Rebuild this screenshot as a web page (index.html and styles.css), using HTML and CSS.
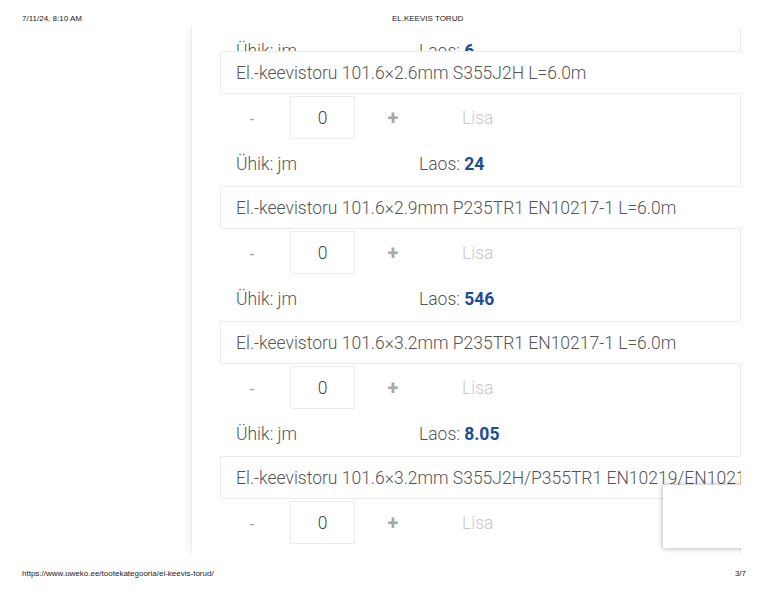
FILE: index.html
```html
<!DOCTYPE html>
<html lang="et">
<head>
    <meta charset="UTF-8">
    <meta name="viewport" content="width=device-width, initial-scale=1.0">
    <title>EL.KEEVIS TORUD</title>
    <link rel="stylesheet" href="styles.css">
</head>
<body>

    <!-- Prindi päis -->
    <header class="print-head">
        <span class="print-date">7/11/24, 8:10 AM</span>
        <span class="print-title">EL.KEEVIS TORUD</span>
    </header>

    <main class="page">
        <aside class="sidebar"></aside>

        <section class="panel">
            <div class="products">

                <!-- eelmise toote lõpp -->
                <div class="card card-partial">
                    <div class="info">
                        <span class="unit">Ühik: jm</span>
                        <span class="stock">Laos: <b>6</b></span>
                    </div>
                </div>

                <div class="product">
                    <h2 class="product-title">El.-keevistoru 101.6×2.6mm S355J2H L=6.0m</h2>
                    <div class="card">
                        <div class="controls">
                            <button class="qty-btn">-</button>
                            <input class="qty" type="text" value="0">
                            <button class="qty-btn plus">+</button>
                            <button class="add-btn">Lisa</button>
                        </div>
                        <div class="info">
                            <span class="unit">Ühik: jm</span>
                            <span class="stock">Laos: <b>24</b></span>
                        </div>
                    </div>
                </div>

                <div class="product">
                    <h2 class="product-title">El.-keevistoru 101.6×2.9mm P235TR1 EN10217-1 L=6.0m</h2>
                    <div class="card">
                        <div class="controls">
                            <button class="qty-btn">-</button>
                            <input class="qty" type="text" value="0">
                            <button class="qty-btn plus">+</button>
                            <button class="add-btn">Lisa</button>
                        </div>
                        <div class="info">
                            <span class="unit">Ühik: jm</span>
                            <span class="stock">Laos: <b>546</b></span>
                        </div>
                    </div>
                </div>

                <div class="product">
                    <h2 class="product-title">El.-keevistoru 101.6×3.2mm P235TR1 EN10217-1 L=6.0m</h2>
                    <div class="card">
                        <div class="controls">
                            <button class="qty-btn">-</button>
                            <input class="qty" type="text" value="0">
                            <button class="qty-btn plus">+</button>
                            <button class="add-btn">Lisa</button>
                        </div>
                        <div class="info">
                            <span class="unit">Ühik: jm</span>
                            <span class="stock">Laos: <b>8.05</b></span>
                        </div>
                    </div>
                </div>

                <div class="product">
                    <h2 class="product-title">El.-keevistoru 101.6×3.2mm S355J2H/P355TR1 EN10219/EN10217-1 L=6.0m</h2>
                    <div class="card">
                        <div class="controls">
                            <button class="qty-btn">-</button>
                            <input class="qty" type="text" value="0">
                            <button class="qty-btn plus">+</button>
                            <button class="add-btn">Lisa</button>
                        </div>
                        <div class="info">
                            <span class="unit">Ühik: jm</span>
                            <span class="stock">Laos: <b>12</b></span>
                        </div>
                    </div>
                </div>

                <!-- reCAPTCHA märk, jääb sisu peale -->
                <div class="captcha-badge"></div>
            </div>
        </section>
    </main>

    <!-- Prindi jalus -->
    <footer class="print-foot">
        <span>https://www.uweko.ee/tootekategooria/el-keevis-torud/</span>
        <span>3/7</span>
    </footer>

</body>
</html>
```

FILE: styles.css
```css
* {
    margin: 0;
    padding: 0;
    box-sizing: border-box;
}

body {
    background: white;
    color: #555;
    font-family: Roboto, "Liberation Sans", Arial, sans-serif;
    width: 768px;
    height: 594px;
    overflow: hidden;
}

/* Prindi päis ja jalus */
.print-head,
.print-foot {
    font-family: "Liberation Sans", Arial, sans-serif;
    font-size: 8px;
    color: #222;
    display: flex;
    padding: 0 22px;
}

.print-head {
    height: 27px;
    padding-top: 14px;
    align-items: flex-start;
}

.print-title {
    margin-left: 310px;
}

.print-foot {
    height: 40px;
    justify-content: space-between;
    padding-top: 15px;
    align-items: flex-start;
}

/* Lehe põhiosa */
.page {
    display: flex;
    height: 527px;
    overflow: hidden;
}

.sidebar {
    width: 191px;
    flex-shrink: 0;
}

.panel {
    flex: 1;
    border-left: 1px solid #ececec;
    box-shadow: -6px 0 8px -4px rgba(0, 0, 0, 0.06);
    padding-left: 28px;
}

.products {
    position: relative;
    width: 521px;
    height: 100%;
    overflow: hidden;
}

.product-title {
    width: 640px;
    height: 43px;
    border: 1px solid #ececec;
    background: white;
    padding: 1px 0 0 15px;
    font-size: 17.5px;
    font-weight: 300;
    line-height: 40px;
    color: #555;
    white-space: nowrap;
    position: relative;
    z-index: 1;
}

.card {
    border-right: 1px solid #ececec;
}

.card-partial {
    height: 24px;
    overflow: hidden;
}

.controls {
    height: 46px;
    display: flex;
    align-items: flex-start;
    padding-top: 1px;
}

.qty-btn {
    width: 64px;
    height: 46px;
    border: none;
    background: none;
    font-family: inherit;
    font-size: 18px;
    color: #aaa;
}

.qty-btn.plus {
    width: 76px;
    font-size: 20px;
    font-weight: bold;
    color: #a8a8a8;
}

.qty {
    width: 65px;
    height: 43px;
    margin: 1px 0 0 6px;
    border: 1px solid #ececec;
    font-family: inherit;
    font-size: 17.5px;
    font-weight: 300;
    color: #444;
    text-align: center;
    outline: none;
}

.add-btn {
    height: 46px;
    margin-left: 31px;
    border: none;
    background: none;
    font-family: inherit;
    font-size: 17.5px;
    font-weight: 300;
    color: #c8c8c8;
}

.info {
    height: 46px;
    display: flex;
    align-items: center;
    padding: 2px 0 0 16px;
    font-size: 17.5px;
    font-weight: 300;
    color: #555;
}

.unit {
    width: 183px;
}

.stock b {
    font-weight: bold;
    color: #1b4e96;
}

/* reCAPTCHA märk */
.captcha-badge {
    position: absolute;
    left: 443px;
    top: 458px;
    width: 256px;
    height: 63px;
    background: white;
    border-radius: 2px;
    box-shadow: 0 0 5px 1px rgba(0, 0, 0, 0.25);
    z-index: 2;
}
```
